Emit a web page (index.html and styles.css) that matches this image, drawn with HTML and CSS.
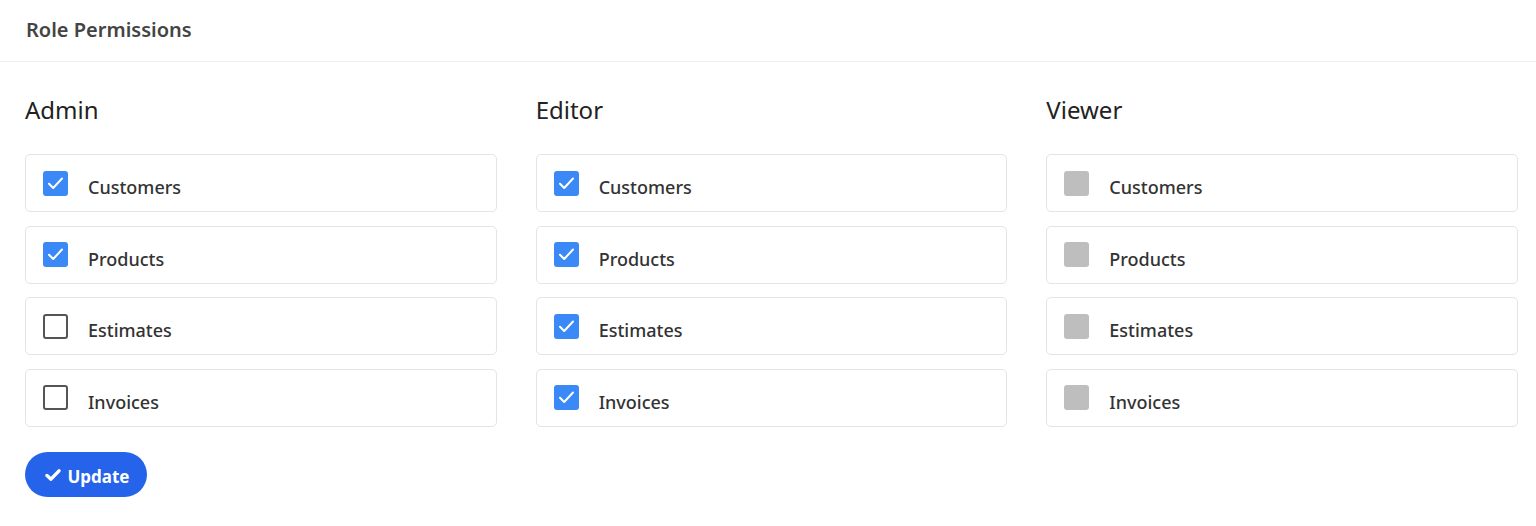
FILE: index.html
```html
<!DOCTYPE html>
<html lang="en">
<head>
  <meta charset="UTF-8" />
  <title>Role Permissions</title>
  <link rel="stylesheet" href="styles.css">
</head>
<body>
  <div class="topbar">Role Permissions</div>

  <div class="container">
    <div class="roles">
      <div class="role">
        <h2>Admin</h2>
        <label class="perm"><span class="box checked"></span><span class="name">Customers</span></label>
        <label class="perm"><span class="box checked"></span><span class="name">Products</span></label>
        <label class="perm"><span class="box"></span><span class="name">Estimates</span></label>
        <label class="perm"><span class="box"></span><span class="name">Invoices</span></label>
      </div>
      <div class="role">
        <h2>Editor</h2>
        <label class="perm"><span class="box checked"></span><span class="name">Customers</span></label>
        <label class="perm"><span class="box checked"></span><span class="name">Products</span></label>
        <label class="perm"><span class="box checked"></span><span class="name">Estimates</span></label>
        <label class="perm"><span class="box checked"></span><span class="name">Invoices</span></label>
      </div>
      <div class="role">
        <h2>Viewer</h2>
        <label class="perm"><span class="box disabled"></span><span class="name">Customers</span></label>
        <label class="perm"><span class="box disabled"></span><span class="name">Products</span></label>
        <label class="perm"><span class="box disabled"></span><span class="name">Estimates</span></label>
        <label class="perm"><span class="box disabled"></span><span class="name">Invoices</span></label>
      </div>
    </div>

    <button class="btn">
      <svg width="16" height="14" viewBox="0 0 16 14"><path d="M2 7.5 L6 11.2 L14 2.8" fill="none" stroke="#fff" stroke-width="3.4" stroke-linecap="round" stroke-linejoin="round"/></svg>
      <span>Update</span>
    </button>
  </div>

  <script>
    document.querySelectorAll(".box").forEach(b => {
      if (b.classList.contains("checked")) {
        b.innerHTML = '<svg width="25" height="25" viewBox="0 0 25 25"><path d="M6 12.8 L10.2 17 L19 7.5" fill="none" stroke="#fff" stroke-width="2" stroke-linecap="round" stroke-linejoin="round"/></svg>';
      }
    });
  </script>
</body>
</html>
```

FILE: styles.css
```css
body {
  font-family: 'Noto Sans', 'Open Sans', sans-serif;
  background: white;
  color: #333;
  margin: 0;
  padding: 0;
}
.topbar {
  height: 62px;
  box-sizing: border-box;
  padding: 0 26px 2px 26px;
  display: flex;
  align-items: center;
  font-size: 20px;
  font-weight: 600;
  color: #444;
  border-bottom: 1px solid #eee;
}
.container {
  padding: 30px 18px 28px 25px;
}
.roles {
  display: grid;
  grid-template-columns: repeat(3, 1fr);
  gap: 39px;
}
.role h2 {
  font-size: 24px;
  font-weight: 400;
  color: #222;
  margin: 0 0 26px 0;
  height: 36px;
  line-height: 36px;
}
.perm {
  display: flex;
  align-items: center;
  height: 58px;
  box-sizing: border-box;
  padding: 0 17px;
  margin-bottom: 13.5px;
  border: 1px solid #e4e4e4;
  border-radius: 5px;
  font-size: 18px;
  font-weight: 500;
  color: #333;
}
.perm .name {
  padding-top: 8px;
}
.box {
  width: 25px;
  height: 25px;
  box-sizing: border-box;
  border-radius: 3px;
  border: 2px solid #555;
  margin-right: 20px;
  margin-top: 0;
  flex: none;
}
.box.checked {
  background: #3b89f6;
  border: none;
}
.box.checked svg {
  display: block;
}
.box.disabled {
  background: #bebebe;
  border: none;
}
.btn {
  margin-top: 12px;
  height: 45px;
  width: 122px;
  border: none;
  border-radius: 23px;
  background: #2563eb;
  color: white;
  font-family: 'Noto Sans', sans-serif;
  font-size: 17px;
  font-weight: 700;
  display: flex;
  align-items: center;
  justify-content: center;
  gap: 6px;
  padding: 0 0 0 3px;
  cursor: pointer;
}
.btn span {
  padding-top: 3px;
}
```
